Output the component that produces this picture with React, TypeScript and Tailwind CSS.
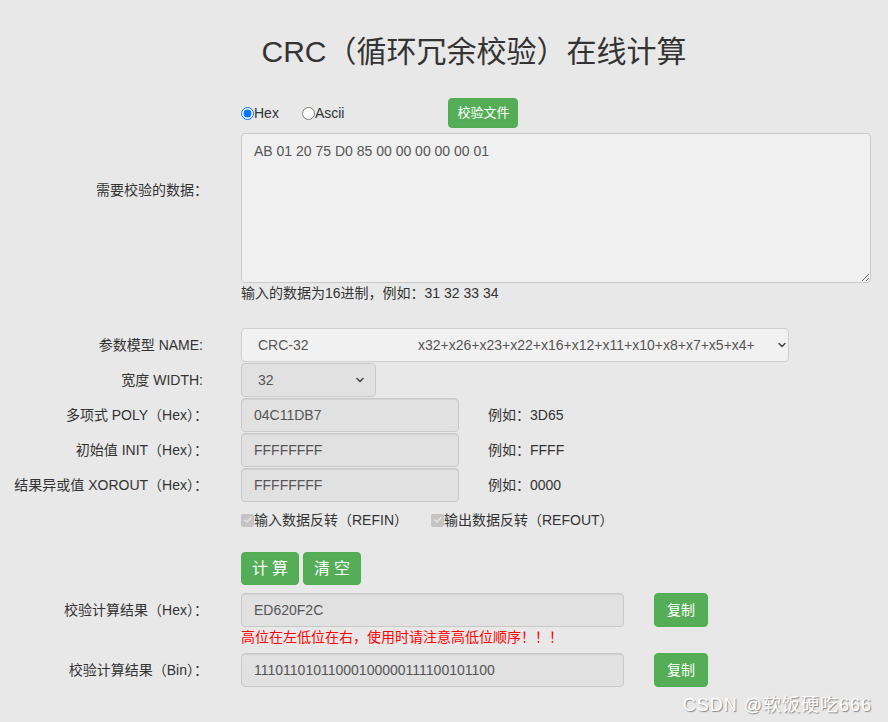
import React from 'react';
import { ChevronDown, Check } from 'lucide-react';

const font = "font-['Liberation_Sans','Noto_Sans_CJK_SC',sans-serif]";

const Label = ({ text, pr = 'pr-[33px]', className = '' }: { text: string; pr?: string; className?: string }) => (
  <div className={`w-[241px] shrink-0 text-right text-[14px] text-[#333] ${pr} ${className}`}>{text}</div>
);

const Box = ({ value, w }: { value: string; w: string }) => (
  <input
    readOnly
    value={value}
    className={`${w} h-[34px] rounded-[4px] border border-[#c9c9c9] bg-[#e1e1e1] pl-[12px] text-[14px] text-[#555] outline-none shadow-[inset_0_1px_1px_rgba(0,0,0,0.075)] ${font}`}
  />
);

const GreenButton = ({ children, className }: { children: React.ReactNode; className: string }) => (
  <button className={`rounded-[4px] border border-[#4cae4c] bg-[#56ad57] text-white ${className}`}>{children}</button>
);

const Tick = () => (
  <span className="flex h-[13px] w-[13px] items-center justify-center rounded-[2px] bg-[#c4c4c4]">
    <Check size={10} strokeWidth={3.5} className="text-[#e6e6e6]" />
  </span>
);

export default function App() {
  return (
    <div className={`relative min-h-[722px] w-full bg-[#e8e8e8] ${font}`}>
      <h1 className="pl-[60px] pt-[35px] text-center text-[30px] leading-[34px] text-[#333]">
        CRC（循环冗余校验）在线计算
      </h1>

      <div className="mt-[29px] flex items-start">
        <Label text="需要校验的数据：" className="pt-[82px] leading-[20px]" />
        <div className="flex flex-col">
          <div className="flex h-[30px] items-center text-[14px] text-[#333]">
            <input type="radio" name="fmt" defaultChecked className="m-0 h-[13px] w-[13px]" />
            <span>Hex</span>
            <input type="radio" name="fmt" className="m-0 ml-[23px] h-[13px] w-[13px]" />
            <span>Ascii</span>
            <GreenButton className="ml-[104px] h-[30px] w-[70px] text-[13px]">校验文件</GreenButton>
          </div>
          <textarea
            readOnly
            value="AB 01 20 75 D0 85 00 00 00 00 00 01"
            className={`mt-[5px] h-[150px] w-[630px] rounded-[4px] border border-[#c9c9c9] bg-[#f0f0f0] px-[12px] pt-[7px] text-[14px] leading-[20px] text-[#555] outline-none ${font}`}
          />
          <div className="text-[14px] leading-[20px] text-[#333]">输入的数据为16进制，例如：31 32 33 34</div>
        </div>
      </div>

      <div className="mt-[25px] flex items-center">
        <Label text="参数模型 NAME:" pr="pr-[38px]" />
        <div className="flex h-[34px] w-[548px] items-center rounded-[4px] border border-[#cfcfcf] bg-[#f1f1f1] pl-[16px] text-[14px] text-[#555]">
          <span className="w-[160px] shrink-0">CRC-32</span>
          <span className="w-[340px] shrink-0 whitespace-nowrap">x32+x26+x23+x22+x16+x12+x11+x10+x8+x7+x5+x4+</span>
          <ChevronDown size={12} strokeWidth={3} className="ml-[18px] text-[#444]" />
        </div>
      </div>

      <div className="mt-px flex items-center">
        <Label text="宽度 WIDTH:" pr="pr-[38px]" />
        <div className="flex h-[34px] w-[135px] items-center rounded-[4px] border border-[#c9c9c9] bg-[#e1e1e1] pl-[16px] text-[14px] text-[#555]">
          <span className="flex-1">32</span>
          <ChevronDown size={12} strokeWidth={3} className="mr-[9px] text-[#444]" />
        </div>
      </div>

      {[
        ['多项式 POLY（Hex）：', '04C11DB7', '例如：3D65'],
        ['初始值 INIT（Hex）：', 'FFFFFFFF', '例如：FFFF'],
        ['结果异或值 XOROUT（Hex）：', 'FFFFFFFF', '例如：0000'],
      ].map(([label, value, hint]) => (
        <div key={label} className="mt-px flex items-center">
          <Label text={label} />
          <Box value={value} w="w-[218px]" />
          <span className="ml-[29px] text-[14px] text-[#333]">{hint}</span>
        </div>
      ))}

      <div className="mt-[8px] flex h-[20px] items-center pl-[241px] text-[14px] text-[#333]">
        <Tick />
        <span>输入数据反转（REFIN）</span>
        <span className="ml-[23px]">
          <Tick />
        </span>
        <span>输出数据反转（REFOUT）</span>
      </div>

      <div className="mt-[22px] flex gap-[4px] pl-[241px]">
        <GreenButton className="h-[33px] w-[58px] text-[16px] tracking-[4px] indent-[4px]">计算</GreenButton>
        <GreenButton className="h-[33px] w-[58px] text-[16px] tracking-[4px] indent-[4px]">清空</GreenButton>
      </div>

      <div className="mt-[8px] flex items-center">
        <Label text="校验计算结果（Hex）：" />
        <Box value="ED620F2C" w="w-[383px]" />
        <GreenButton className="ml-[30px] h-[34px] w-[54px] text-[14px]">复制</GreenButton>
      </div>
      <div className="pl-[241px] text-[14px] leading-[20px] text-[#ff0000]">高位在左低位在右，使用时请注意高低位顺序！！！</div>
      <div className="mt-[6px] flex items-center">
        <Label text="校验计算结果（Bin）：" />
        <Box value="11101101011000100000111100101100" w="w-[383px]" />
        <GreenButton className="ml-[30px] h-[34px] w-[54px] text-[14px]">复制</GreenButton>
      </div>

      <div className="absolute right-[16px] top-[692px] text-[18px] tracking-[1px] text-white [text-shadow:1px_1px_1px_#888]">
        CSDN @软饭硬吃666
      </div>
    </div>
  );
}
